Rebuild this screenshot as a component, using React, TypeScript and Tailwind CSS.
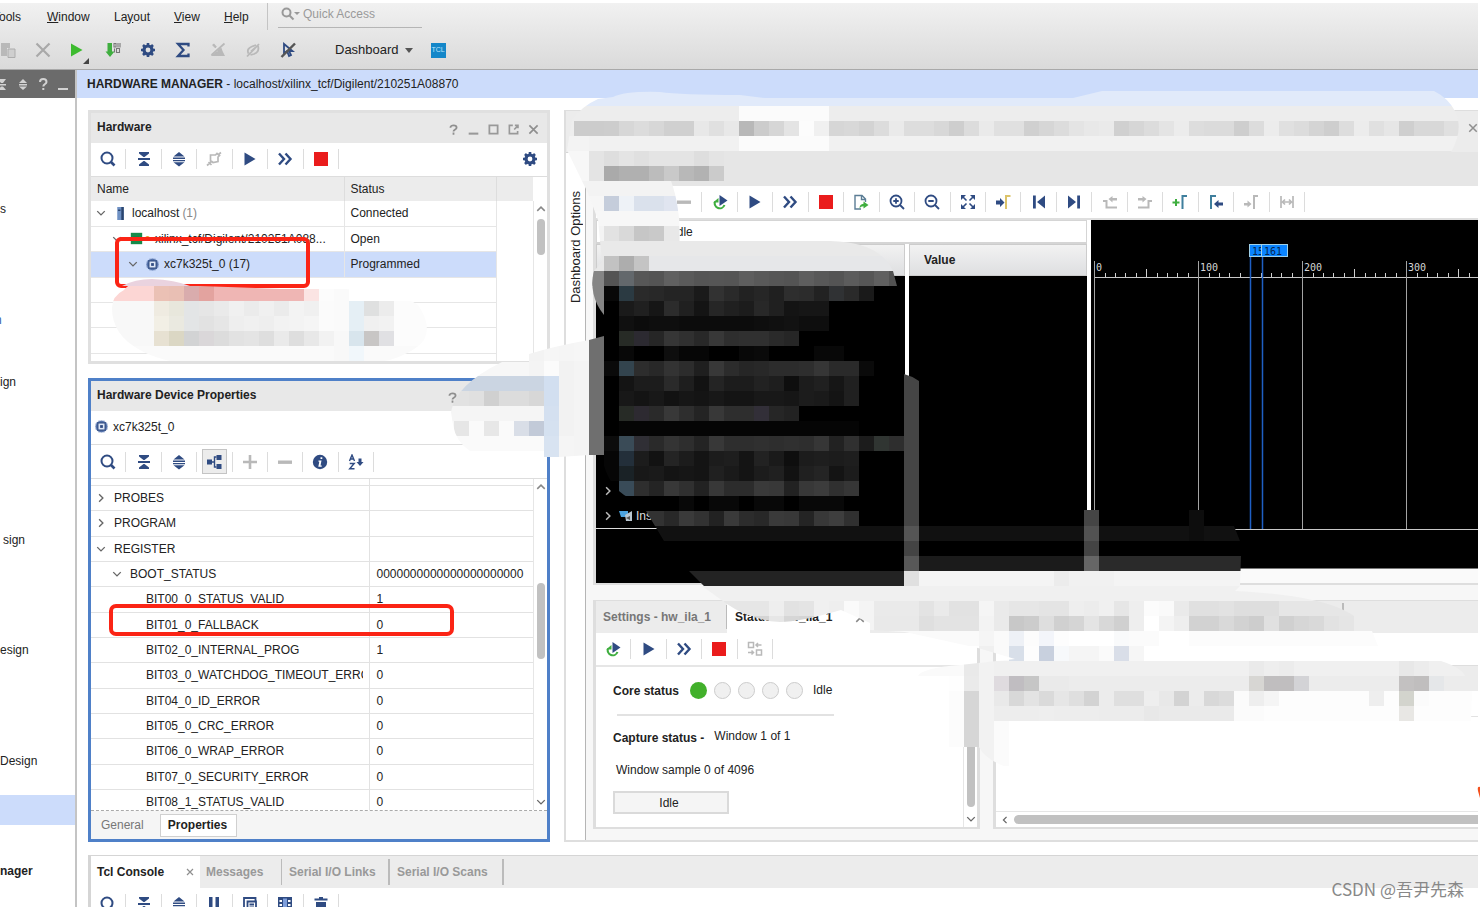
import type { ReactNode } from "react";

const NAVY = "#2f4b82";
const GREY = "#b9b9b9";
const GREEN = "#3fae3f";

const icons: Record<string, ReactNode> = {
  search: (
    <g fill="none" stroke={NAVY} strokeWidth="2">
      <circle cx="7" cy="7" r="5.500" />
      <path d="M11 11L14.500 14.500" strokeWidth="2.600" />
    </g>
  ),
  collapse: (
    <g fill={NAVY}>
      <path d="M3 1h10v1.500L8.500 6h-1L3 2.500z M2 7.100h12v1.800H2z M3 15h10v-1.500L8.500 10h-1L3 13.500z" />
    </g>
  ),
  expand: (
    <path fill={NAVY} d="M8 1l5.500 4.500H2.500z M2 6.500h12v1.400H2z M2 8.900h12v1.400H2z M8 15.500l5.500-4.200H2.500z" />
  ),
  link: (
    <g fill="none" stroke={GREY} strokeWidth="1.700">
      <path d="M4.500 4h5l1.500-1.500 2.500 2L12 6v4.500l-5 1-2.500-2z M1 14.500L5 11 M12.500 3.500l2.500-2 M2.500 11l3 3" />
    </g>
  ),
  play: <path fill={NAVY} d="M2.500 1.500L13.500 8 2.500 14.500z" />,
  run: <path fill="#3dbb2f" d="M1 1.500L12.500 8 1 14.500z" />,
  forward: (
    <path fill="none" stroke={NAVY} strokeWidth="2.400" d="M2 2.500L7 8l-5 5.500 M8.500 2.500L13.500 8l-5 5.500" />
  ),
  stop: <path fill="#ea1c1c" d="M1 1h14v14H1z" />,
  gear: (
    <g fill="none" stroke={NAVY}>
      <circle cx="8" cy="8" r="4" strokeWidth="3.200" />
      <path d="M8 1v3 M8 12v3 M1 8h3 M12 8h3 M3 3l2 2 M11 11l2 2 M13 3l-2 2 M5 11l-2 2" strokeWidth="2.600" />
    </g>
  ),
  tree: (
    <g fill={NAVY}>
      <path d="M1 5.500h5v5H1z M10.500 1h5v5h-5z M10.500 10h5v5h-5z" />
      <path d="M6 8h2.500 M10.500 3H8.500v10h2" fill="none" stroke={NAVY} strokeWidth="1.400" />
    </g>
  ),
  plus: <path fill={GREY} d="M6.700 1h2.600v5.700H15v2.600H9.300V15H6.700V9.300H1V6.700h5.700z" />,
  minus: <path fill={GREY} d="M1 6.500h14v3.400H1z" />,
  info: (
    <g>
      <circle cx="8" cy="8" r="7.200" fill={NAVY} />
      <path d="M8.500 3.200h1.800v1.800H8.500z M6.500 6.500h3l-1 5h1.200v1.200H6.300l1-5H6.500z" fill="#fff" />
    </g>
  ),
  sort: (
    <g fill="none" stroke={NAVY} strokeWidth="1.400">
      <path d="M1.500 7L4 1l2.500 6 M2.400 5h3.200 M1.700 9.500h4.500l-4.500 5.300h4.800" />
      <path d="M12 4.500v4" strokeWidth="3" />
      <path d="M8.500 8h7L12 12z" fill={NAVY} stroke="none" />
    </g>
  ),
  rerun: (
    <g>
      <path fill="none" stroke={GREEN} strokeWidth="2" d="M3 7.500a4.800 4.800 0 1 0 9.500 3.500" />
      <path fill={GREEN} d="M1 8.500h5.500V4z" />
      <path fill={NAVY} d="M7.500 1L15.500 6.500 7.500 12z" />
    </g>
  ),
  exportDoc: (
    <g>
      <path fill="none" stroke="#5b7d95" strokeWidth="1.400" d="M8 15H2V1.500h7L12.500 5v3 M8.500 1.500V5.500h4" />
      <path fill={GREEN} d="M10.500 7.500l5 3.500-5 3.500v-2.200c-2 0-3 .7-4 2.200 0-3 1.500-4.500 4-4.700z" />
    </g>
  ),
  zoomIn: (
    <g fill="none" stroke={NAVY} strokeWidth="1.800">
      <circle cx="7" cy="7" r="5.500" />
      <path d="M4.300 7h5.400 M7 4.300v5.400 M11 11l4 4" />
    </g>
  ),
  zoomOut: (
    <g fill="none" stroke={NAVY} strokeWidth="1.800">
      <circle cx="7" cy="7" r="5.500" />
      <path d="M4.300 7h5.400 M11 11l4 4" />
    </g>
  ),
  fit: (
    <g fill={NAVY} stroke={NAVY}>
      <path stroke="none" d="M1 1h5L1 6z M15 1h-5l5 5z M1 15h5l-5-5z M15 15h-5l5-5z" />
      <path strokeWidth="1.600" d="M3 3l3.500 3.500 M13 3L9.500 6.500 M3 13l3.500-3.500 M13 13L9.500 9.500" />
    </g>
  ),
  toTrigger: (
    <g>
      <path fill={NAVY} d="M1 6.500h4V4l4.500 4.500L5 13v-2.500H1z" />
      <path fill="none" stroke="#dcc36a" strokeWidth="2" d="M15.500 2H11v13" />
    </g>
  ),
  first: <path fill={NAVY} d="M2 1.500h2.800v13H2z M14 1.500v13L6 8z" />,
  last: <path fill={NAVY} d="M14 1.500h-2.800v13H14z M2 1.500v13L10 8z" />,
  prevEdge: (
    <g>
      <path fill="none" stroke={GREY} strokeWidth="2" d="M1 7h3.500v6.500H15" />
      <path fill={GREY} d="M6.500 5L10.500 2v2H15v2.500h-4.500v2z" />
    </g>
  ),
  nextEdge: (
    <g>
      <path fill="none" stroke={GREY} strokeWidth="2" d="M15 7h-3.500v6.500H1" />
      <path fill={GREY} d="M9.500 5L5.500 2v2H1v2.500h4.500v2z" />
    </g>
  ),
  addMarker: (
    <g>
      <path fill={GREEN} d="M3 5h2v2.500h2.500v2H5V12H3V9.500H.5v-2H3z" />
      <path fill="none" stroke="#3f7f9d" strokeWidth="2" d="M15 2h-4.500v13" />
    </g>
  ),
  prevMarker: (
    <g>
      <path fill="none" stroke="#3f7f9d" strokeWidth="2" d="M8 2H3v13" />
      <path fill={NAVY} d="M6 10l4.500-4v2.500H15v3h-4.500V14z" />
    </g>
  ),
  nextMarker: (
    <g>
      <path fill={GREY} d="M1 9h3.500V6.500L8.500 10l-4 3.500V11.500H1z" />
      <path fill="none" stroke={GREY} strokeWidth="2" d="M15 2h-4v13" />
    </g>
  ),
  span: (
    <path fill="none" stroke={GREY} strokeWidth="1.700" d="M2 2v12 M14 2v12 M3 8h10 M6 5.500L3.500 8 6 10.500 M10 5.500L12.500 8 10 10.500" />
  ),
  swap: (
    <path fill="none" stroke={GREY} strokeWidth="1.500" d="M1.500 1.500h5v5h-5z M9.500 9h5v5h-5z M9 4h5.500 M11 2L9 4l2 2 M1 11.500h5.500 M4.500 9.500l2 2-2 2" />
  ),
  paste: (
    <g fill={GREY}>
      <path d="M1 1h9v5H7v8H1z" />
      <path d="M8 7h7v8.500H8z" fill="#cfcfcf" stroke="#adadad" />
    </g>
  ),
  cross: <path fill="none" stroke="#a9a9a9" strokeWidth="2.200" d="M1.500 1.500l13 13 M14.500 1.500l-13 13" />,
  download: (
    <g>
      <path fill={GREEN} d="M2.500 1h4.500v8.500h2.500L5 15 .5 9.500h2z" />
      <path fill="none" stroke="#777" strokeWidth="1.100" d="M9 1.500h2v3.500H9z M13 1v4.500 M15 1v4.500 M9.500 6.500v4 M11.500 6.500h3v4h-3z" />
    </g>
  ),
  sigma: <path fill="none" stroke={NAVY} strokeWidth="2.300" d="M13.500 4.500V2H3l5.500 6L3 14h10.500v-2.500" />,
  noEdit: (
    <g fill={GREY}>
      <path d="M2 3l2-1.500 3 3.500-1.500 1.500z M9 6h2.500l1 3 2.500 5H1l3-4h3z" />
      <path d="M1 12L14 1" fill="none" stroke="#e4e4e4" strokeWidth="3" />
      <path d="M1.500 13L14.500 1.500" fill="none" stroke={GREY} strokeWidth="1.800" />
    </g>
  ),
  noLink: (
    <path fill="none" stroke={GREY} strokeWidth="1.800" d="M2 14.500L14 2 M3.500 11.500c-2-4 1-6 3.500-7l4-1.500 M5.500 13l3.500-1c4-1.500 5-4.500 4-8 M6 9.500L10 6" />
  ),
  noCursor: (
    <g fill="none">
      <path stroke={NAVY} strokeWidth="1.800" d="M4 2v9l3-2 2 5 2-1-2-4h3.500z" />
      <path stroke="#555" strokeWidth="2.400" d="M1.500 15L15 1.500" />
    </g>
  ),
  pause: <path fill={NAVY} d="M3 1h3.500v14H3z M9.500 1H13v14H9.500z" />,
  copy: (
    <g fill="none" stroke={NAVY} strokeWidth="1.800">
      <path d="M13.500 5V2H2v12h3" />
      <path d="M5.500 5.500h8.500V15H5.500z M7.500 8.500h4.500 M7.500 11.500h4.500" />
    </g>
  ),
  columns: (
    <g>
      <path fill={NAVY} d="M1 1h14v14H1z" />
      <path fill="#fff" d="M2.500 4h2.500v2H2.500z M2.500 8h2.500v2H2.500z M11 4h2.500v2H11z M11 8h2.500v2H11z" />
      <path fill="#7f9fdc" d="M6 2.500h4V14H6z" />
    </g>
  ),
  trash: <path fill={NAVY} d="M6 1h4v1.500h4.500V4.500h-13v-2H6z M3 6h10v9H3z" />,
  chip: (
    <g>
      <circle cx="8" cy="8" r="7.500" fill="#5673ab" />
      <path d="M5 0v16 M11 0v16 M0 5h16 M0 11h16" fill="none" stroke="#8fa5cf" strokeWidth=".8" />
      <path d="M3.500 3.500h9v9h-9z" fill="#dfe7f6" stroke={NAVY} strokeWidth="1.500" />
      <path d="M6.300 6.300h3.400v3.400H6.300z" fill={NAVY} />
    </g>
  ),
  down: <path fill="none" stroke="#666" strokeWidth="1.800" d="M3 5.500L8 10.500l5-5" />,
  right: <path fill="none" stroke="#666" strokeWidth="1.800" d="M5.500 3L10.500 8l-5 5" />,
  rightLight: <path fill="none" stroke="#bbb" strokeWidth="2" d="M5.500 3L10.500 8l-5 5" />,
  up: <path fill="none" stroke="#888" strokeWidth="2" d="M3 10.500L8 5.500l5 5" />,
  left: <path fill="none" stroke="#666" strokeWidth="2" d="M10.500 3L5.500 8l5 5" />,
  help: (
    <path fill="none" stroke="#8f8f8f" strokeWidth="2.600" d="M3.500 5.500C3.500 1 12.500 1 12.500 5.500 12.500 8 8 8 8 11 M8 12.500v3" />
  ),
  minimize: <path fill="#999" d="M1 12.500h14v3H1z" />,
  maximize: <path fill="none" stroke="#999" strokeWidth="2.600" d="M2 2h12v12H2z" />,
  float: <path fill="none" stroke="#999" strokeWidth="2.400" d="M7 2H2v12h12v-4 M9 8l5-5 M10 2h4.500v4" />,
  close: <path fill="none" stroke="#8f8f8f" strokeWidth="2.400" d="M2 2l12 12 M14 2L2 14" />,
  server: (
    <g>
      <path fill="#6f91c4" d="M4 0h8v16H4z" />
      <path fill="#2b456f" d="M9 0h3v16H9z M5 3h3v2H5z" />
    </g>
  ),
  board: (
    <g>
      <path fill="#168a4a" d="M1 1h14v14H1z" />
      <path fill="#0c5a2f" d="M4 6h7v5H4z" />
    </g>
  ),
};

function Icon({ name, className = "size-4" }: { name: string; className?: string }) {
  return (
    <svg viewBox="0 0 16 16" className={`shrink-0 ${className}`} aria-hidden="true">
      {icons[name]}
    </svg>
  );
}

function Tool({ name, active = false }: { name: string; active?: boolean }) {
  return (
    <div className="flex h-5 items-center justify-center border-r border-[#dcdcdc]">
      <button
        type="button"
        aria-label={name}
        className={
          active
            ? "flex size-[25px] items-center justify-center border border-[#c4c4c4] bg-[#ececec]"
            : "flex size-6 items-center justify-center"
        }
      >
        <Icon name={name} />
      </button>
    </div>
  );
}

const hardwareRows = [
  { pad: "pl-1", icon: "server", name: "localhost", count: "(1)", status: "Connected" },
  { pad: "pl-5", icon: "board", name: "xilinx_tcf/Digilent/210251A088...", count: "", status: "Open" },
  { pad: "pl-9", icon: "chip", name: "xc7k325t_0 (17)", count: "", status: "Programmed" },
];

const propertyRows = [
  { name: "PROBES", value: "", arrow: "right", pad: "pl-1" },
  { name: "PROGRAM", value: "", arrow: "right", pad: "pl-1" },
  { name: "REGISTER", value: "", arrow: "down", pad: "pl-1" },
  { name: "BOOT_STATUS", value: "0000000000000000000000", arrow: "down", pad: "pl-5" },
  { name: "BIT00_0_STATUS_VALID", value: "1" },
  { name: "BIT01_0_FALLBACK", value: "0" },
  { name: "BIT02_0_INTERNAL_PROG", value: "1" },
  { name: "BIT03_0_WATCHDOG_TIMEOUT_ERROR", value: "0" },
  { name: "BIT04_0_ID_ERROR", value: "0" },
  { name: "BIT05_0_CRC_ERROR", value: "0" },
  { name: "BIT06_0_WRAP_ERROR", value: "0" },
  { name: "BIT07_0_SECURITY_ERROR", value: "0" },
  { name: "BIT08_1_STATUS_VALID", value: "0" },
];

const navItems = [
  { label: "s", className: "h-[118px]" },
  { label: "n", className: "h-[111px] -ml-[5px] text-[#3b5ea8]" },
  { label: "ign", className: "h-[62px]" },
  { label: "sign", className: "h-[158px] pl-[3px]" },
  { label: "esign", className: "h-[110px]" },
  { label: "Design", className: "h-[111px]" },
];

function MenuBar() {
  return (
    <header className="h-[70px] shrink-0 overflow-hidden border-t-[3px] border-b border-t-white border-b-[#a9a9a9] bg-linear-to-b from-[#f1f1f1] to-[#dadada]">
      <div className="flex h-[27px] items-center">
        <nav className="-ml-[7px] flex w-[274px] items-center text-[12px]">
          <button type="button" className="w-[54px] text-left">Tools</button>
          <button type="button" className="w-[67px] text-left"><u>W</u>indow</button>
          <button type="button" className="w-[60px] text-left">La<u>y</u>out</button>
          <button type="button" className="w-[50px] text-left"><u>V</u>iew</button>
          <button type="button" className="text-left"><u>H</u>elp</button>
        </nav>
        <label className="flex h-full items-start border-l border-[#c4c4c4] pl-[10px]">
          <span className="flex h-[25px] w-[144px] items-center gap-0.5 border-b border-[#b5b5b5] pb-0.5 pl-[3px]">
            <svg viewBox="0 0 20 14" className="h-3.5 w-5 shrink-0" aria-hidden="true">
              <g fill="none" stroke="#999" strokeWidth="2">
                <circle cx="5.500" cy="5.500" r="4" />
                <path d="M8.500 8.500l4 4" />
              </g>
              <path fill="#999" d="M13 5h6l-3 3z" />
            </svg>
            <input
              type="text"
              aria-label="Quick Access"
              placeholder="Quick Access"
              className="w-[110px] bg-transparent text-[12px] outline-none placeholder:text-[#9a9a9a]"
            />
          </span>
        </label>
      </div>
      <div className="flex h-10 items-center">
        <div className="-ml-[10px] grid w-[316px] shrink-0 grid-cols-9">
          {["paste", "cross", "run", "download", "gear", "sigma", "noEdit", "noLink", "noCursor"].map((name) => (
            <button key={name} type="button" aria-label={name} className="relative flex items-center justify-center">
              <Icon name={name} />
              {name === "run" && (
                <svg viewBox="0 0 6 6" className="absolute right-1.5 -bottom-1.5 size-1.5" aria-hidden="true">
                  <path d="M6 0v6H0z" fill="#444" />
                </svg>
              )}
            </button>
          ))}
        </div>
        <button type="button" className="ml-[29px] flex items-center gap-1.5 text-[13px]">
          Dashboard
          <svg viewBox="0 0 8 5" className="h-[5px] w-2" aria-hidden="true">
            <path d="M0 0h8L4 5z" fill="#555" />
          </svg>
        </button>
        <button type="button" className="ml-[18px] flex size-[15px] items-center justify-center overflow-hidden bg-[#1487c9] text-[7px] text-[#bfe4fb]">
          TCL
        </button>
      </div>
    </header>
  );
}

function FlowNavigator() {
  return (
    <aside className="flex w-[77px] shrink-0 flex-col overflow-hidden border-r-2 border-[#c4c4c4] text-[12px]">
      <div className="flex h-[28px] shrink-0 items-center bg-[#6b6b6b] text-[#ddd]">
        <svg viewBox="0 0 75 28" className="h-7 w-[75px]" aria-hidden="true">
          <g fill="#d2d2d2">
            <path d="M-2 9h8L3 13H1z M-2 14h8v1.500h-8z M-2 20h8L3 16.500H1z" />
            <path d="M23 9l4 4h-8z M19 14h8v1.500h-8z M23 20l4-3.500h-8z" />
            <path d="M58 18h10v2H58z" />
          </g>
          <path d="M40 12c0-4 6.500-4 6.500 0 0 2-3.200 2-3.200 4.500 M43.300 18v2" fill="none" stroke="#d2d2d2" strokeWidth="2" />
        </svg>
      </div>
      <ul>
        {navItems.map((item) => (
          <li key={item.label} className={`flex items-end leading-[14px] ${item.className}`}>
            {item.label}
          </li>
        ))}
      </ul>
      <div className="mt-[27px] h-[30px] shrink-0 bg-[#ccdcfb]" />
      <div className="mt-[39px] font-bold leading-[14px]">nager</div>
    </aside>
  );
}

function HardwarePanel() {
  return (
    <section className="flex h-[254px] shrink-0 flex-col border-[3px] border-[#e0e0e0] bg-white">
      <div className="flex h-[30px] shrink-0 items-center justify-between bg-[#e8e8e8] pr-2 pb-0.5 pl-1.5">
        <h2 className="text-[12px] font-bold">Hardware</h2>
        <div className="mt-1 flex gap-[9px]">
          {["help", "minimize", "maximize", "float", "close"].map((name) => (
            <button key={name} type="button" aria-label={name}>
              <Icon name={name} className="size-[11px]" />
            </button>
          ))}
        </div>
      </div>
      <div className="flex h-[33px] shrink-0 items-center justify-between pr-[9px] pb-px">
        <div className="grid w-[248px] grid-cols-7">
          {["search", "collapse", "expand", "link", "play", "forward", "stop"].map((name) => (
            <Tool key={name} name={name} />
          ))}
        </div>
        <button type="button" aria-label="settings">
          <Icon name="gear" />
        </button>
      </div>
      <div className="flex min-h-0 flex-1 overflow-hidden border-t border-[#ddd]">
        <div className="flex-1">
          <table className="w-full table-fixed text-left text-[12px]">
            <thead className="bg-[#ececec]">
              <tr className="h-6">
                <th className="w-[253px] border-r border-[#ddd] pl-1.5 font-normal">Name</th>
                <th className="w-[152px] border-r border-[#ddd] pl-1.5 font-normal">Status</th>
                <th />
              </tr>
            </thead>
            <tbody className="[&>tr]:h-[25px] [&>tr:nth-child(3n)]:h-[26px]">
              {hardwareRows.map((row) => (
                <tr key={row.name}>
                  <td className={`border-r border-b border-[#e6e6e6] ${row.icon === "chip" ? "bg-[#ccdcfb]" : ""}`}>
                    <div className={`flex items-center whitespace-nowrap ${row.pad}`}>
                      <Icon name="down" className="size-3" />
                      <Icon name={row.icon} className="ml-[7px] size-[13px]" />
                      {row.icon === "board" && <i className="ml-0.5 size-[5px] rounded-full bg-[#e0a030]" />}
                      <span className="ml-[5px]">{row.name}</span>
                      <span className="ml-[3px] text-[#888]">{row.count}</span>
                    </div>
                  </td>
                  <td className={`border-r border-b border-[#e6e6e6] pl-1.5 ${row.icon === "chip" ? "bg-[#ccdcfb]" : ""}`}>
                    {row.status}
                  </td>
                  <td />
                </tr>
              ))}
              {[0, 1, 2, 3].map((n) => (
                <tr key={n}>
                  <td className="border-b border-[#e6e6e6]" />
                  <td className="border-r border-b border-[#e6e6e6]" />
                  <td />
                </tr>
              ))}
            </tbody>
          </table>
        </div>
        <div className="mt-6 flex w-[14px] shrink-0 flex-col items-center border-l border-[#e6e6e6] bg-white">
          <Icon name="up" className="my-0.5 size-3" />
          <div className="mt-0.5 h-9 w-2 rounded-full bg-[#c1c1c1]" />
        </div>
      </div>
    </section>
  );
}

function PropertiesPanel() {
  return (
    <section className="flex min-h-0 flex-1 flex-col border-[3px] border-[#4f80c8] bg-white text-[12px]">
      <div className="flex h-[30px] shrink-0 items-center justify-between bg-[#e8e8e8] pr-[89px] pb-0.5 pl-1.5">
        <h2 className="font-bold">Hardware Device Properties</h2>
        <button type="button" aria-label="help" className="mt-1">
          <Icon name="help" className="size-[11px]" />
        </button>
      </div>
      <div className="flex h-[33px] shrink-0 items-center gap-[5px] pb-0.5 pl-1">
        <Icon name="chip" className="size-[13px]" />
        xc7k325t_0
      </div>
      <div className="flex h-[34px] shrink-0 items-center border-t border-[#ddd]">
        <div className="grid w-[283px] grid-cols-8">
          {["search", "collapse", "expand", "tree", "plus", "minus", "info", "sort"].map((name) => (
            <Tool key={name} name={name} active={name === "tree"} />
          ))}
        </div>
      </div>
      <div className="flex min-h-0 flex-1 overflow-hidden border-t border-b border-t-[#ddd] border-b-[#aaa] [border-bottom-style:dashed]">
        <div className="min-w-0 flex-1">
          <table className="w-full table-fixed">
            <tbody className="[&>tr]:h-[25px] [&>tr:nth-child(3n)]:h-[26px]">
              <tr className="!h-1.5">
                <td className="w-[278px] border-r border-b border-[#e2e2e2]" />
                <td className="border-b border-[#e2e2e2]" />
              </tr>
              {propertyRows.map((row) => (
                <tr key={row.name}>
                  <td className="border-r border-b border-[#e2e2e2] pr-1.5">
                    {row.arrow ? (
                      <div className={`flex items-center gap-[7px] ${row.pad}`}>
                        <Icon name={row.arrow} className="size-3" />
                        {row.name}
                      </div>
                    ) : (
                      <div className="overflow-hidden pl-[55px] whitespace-nowrap">{row.name}</div>
                    )}
                  </td>
                  <td className="overflow-hidden border-b border-[#e2e2e2] pl-[7px] whitespace-nowrap">{row.value}</td>
                </tr>
              ))}
            </tbody>
          </table>
        </div>
        <div className="flex w-[14px] flex-col items-center border-l border-[#e6e6e6]">
          <Icon name="up" className="my-0.5 size-3" />
          <div className="mt-[88px] h-[76px] w-2 rounded-full bg-[#c1c1c1]" />
          <Icon name="down" className="mt-auto mb-0.5 size-3" />
        </div>
      </div>
      <div className="flex h-7 shrink-0 items-center bg-[#f5f5f5] pl-2.5" role="tablist">
        <button type="button" role="tab" className="w-[59px] text-left text-[#777]">General</button>
        <button type="button" role="tab" className="h-[23px] w-[77px] border border-[#d0d0d0] bg-white pr-0.5 font-bold">
          Properties
        </button>
      </div>
    </section>
  );
}

function Waveform() {
  const ticks = Array.from({ length: 90 }, (_, i) => i);
  return (
    <svg className="block h-full w-full bg-black" role="img" aria-label="Waveform">
      <path d="M4 57.500H2000 M0 309.500H2000" stroke="#c8c8c8" />
      {ticks.map((i) => {
        const x = Math.floor(3.6 + i * 10.4);
        const top = i % 10 === 0 ? 41 : i % 5 === 0 ? 49 : 53;
        return (
          <g key={i}>
            <path d={`M${x}.5 ${top}V${i % 10 === 0 ? 309 : 57}`} stroke={i % 10 === 0 ? "#a4a4a4" : "#d0d0d0"} />
            {i % 10 === 0 && (
              <text x={x + 2} y="51" fill="#d6d6d6" className="font-['DejaVu_Sans_Mono',monospace] text-[10px]">
                {i * 10}
              </text>
            )}
          </g>
        );
      })}
      <path d="M159.500 36V309 M171.500 36V309" stroke="#1f5fc4" strokeWidth="1.500" />
      <rect x="158.500" y="24.500" width="13" height="12" fill="#0a84ff" stroke="#9fd0e8" />
      <text x="161" y="35" fill="#06264f" className="font-['DejaVu_Sans_Mono',monospace] text-[10px]">15</text>
      <rect x="170.500" y="24.500" width="26" height="12" fill="#0a84ff" stroke="#9fd0e8" />
      <text x="173" y="35" fill="#06264f" className="font-['DejaVu_Sans_Mono',monospace] text-[10px]">161</text>
    </svg>
  );
}

const waveTools = [
  "search", "plus", "minus", "rerun", "play", "forward", "stop", "exportDoc", "zoomIn", "zoomOut",
  "fit", "toTrigger", "first", "last", "prevEdge", "nextEdge", "addMarker", "prevMarker", "nextMarker", "span",
];

function WaveWindow() {
  return (
    <section className="flex min-h-0 flex-1 flex-col border-b-2 border-l-[3px] border-[#dedede] bg-white">
      <div className="flex h-[34px] shrink-0 items-center border-b-2 border-[#dedede]">
        <div className="grid w-[709px] grid-cols-20">
          {waveTools.map((name) => (
            <Tool key={name} name={name} />
          ))}
        </div>
      </div>
      <div className="flex min-h-0 flex-1">
        <div className="flex w-[491px] shrink-0 flex-col">
          <div className="flex h-6 shrink-0 items-center border border-b-2 border-[#d5d5d5] pl-[15px] text-[12px]">
            ILA Status: Idle
          </div>
          <div className="flex min-h-0 flex-1">
            <div className="flex w-[309px] flex-col">
              <div className="h-8 border border-[#ccc] bg-linear-to-b from-[#f2f2f2] to-[#dedfe1]" />
              <ul className="flex-1 bg-black pl-1.5 text-[12px] text-[#ddd]">
                <li className="mt-[202px] flex h-[25px] items-center">
                  <Icon name="rightLight" className="size-3" />
                </li>
                <li className="flex h-[25px] items-center">
                  <Icon name="rightLight" className="size-3" />
                  <svg viewBox="0 0 14 12" className="ml-[5px] h-3 w-3.5" aria-hidden="true">
                    <path d="M0 1h9v6H2z" fill="#4ba3e0" />
                    <path d="M6 5l7-4v10H7z" fill="#b9c6d0" />
                    <path d="M7 8l4-2v4z" fill="#555" />
                  </svg>
                  <span className="ml-[3px]">Ins</span>
                </li>
                <li className="-ml-1.5 border-t border-[#ddd]" />
              </ul>
            </div>
            <div className="ml-1 flex w-[178px] flex-col">
              <div className="flex h-8 items-center border border-[#ccc] bg-linear-to-b from-[#f2f2f2] to-[#dedfe1] pl-3.5 text-[12px] font-bold">
                Value
              </div>
              <div className="flex-1 bg-black" />
            </div>
          </div>
        </div>
        <div className="ml-1 flex min-w-0 flex-1 flex-col">
          <div className="min-h-0 flex-1">
            <Waveform />
          </div>
          <div className="h-[15px] shrink-0 border-t border-[#777] bg-[#fafafa]" />
        </div>
      </div>
    </section>
  );
}

function StatusPanel() {
  return (
    <section className="flex w-[387px] shrink-0 flex-col border-x-[3px] border-t border-b-2 border-[#dedede] bg-white text-[12px]">
      <div className="flex h-8 shrink-0 items-center bg-[#ececec]" role="tablist">
        <button type="button" role="tab" className="h-6 w-[131px] border-r border-[#bbb] pl-[7px] text-left font-bold text-[#777]">
          Settings - hw_ila_1
        </button>
        <button type="button" role="tab" className="flex h-8 w-[143px] items-center justify-between bg-white pr-1 pl-2 font-bold">
          Status - hw_ila_1
          <Icon name="up" className="mt-1.5 size-3" />
        </button>
      </div>
      <div className="flex h-[34px] shrink-0 items-center border-b-2 border-[#e6e6e6]">
        <div className="grid w-[177px] grid-cols-5">
          {["rerun", "play", "forward", "stop", "swap"].map((name) => (
            <Tool key={name} name={name} />
          ))}
        </div>
      </div>
      <div className="flex min-h-0 flex-1">
        <div className="flex-1 pt-[13px] pl-[17px]">
          <div className="flex items-center">
            <strong className="w-[77px] pt-0.5">Core status</strong>
            <div className="flex gap-[7px]">
              <i className="size-[17px] rounded-full bg-[#42b02b]" />
              <i className="size-[17px] rounded-full border border-[#ccc] bg-[#f0f0f0]" />
              <i className="size-[17px] rounded-full border border-[#ccc] bg-[#f0f0f0]" />
              <i className="size-[17px] rounded-full border border-[#ccc] bg-[#f0f0f0]" />
              <i className="size-[17px] rounded-full border border-[#ccc] bg-[#f0f0f0]" />
            </div>
            <span className="ml-2.5">Idle</span>
          </div>
          <hr className="mt-3.5 ml-1 w-[217px] border-t-2 border-[#e2e2e2]" />
          <div className="mt-[11px] flex">
            <strong className="pt-0.5">Capture status -</strong>
            <span className="ml-2.5">Window 1 of 1</span>
          </div>
          <p className="mt-3.5 pl-[3px]">Window sample 0 of 4096</p>
          <div className="mt-3 flex h-[23px] w-[116px] items-center justify-center border-2 border-[#dadada] bg-[#f5f5f5] pr-1">
            Idle
          </div>
        </div>
        <div className="flex w-[14px] flex-col items-center border-l border-[#e6e6e6]">
          <Icon name="up" className="my-0.5 size-3" />
          <div className="w-2 flex-1 rounded-full bg-[#c1c1c1]" />
          <Icon name="down" className="mt-1.5 mb-0.5 size-3" />
        </div>
      </div>
    </section>
  );
}

function TriggerPanel() {
  return (
    <section className="flex min-w-0 flex-1 flex-col border-t border-b-2 border-l-[3px] border-[#dedede] bg-white">
      <div className="h-8 shrink-0 bg-[#ececec] pt-0.5">
        <div className="h-6 w-[348px] border-r-2 border-[#bbb]" />
      </div>
      <div className="h-[33px] shrink-0 border-b border-[#dedede]" />
      <div className="h-[25px] shrink-0 border-b border-[#e2e2e2] bg-[#ececec]" />
      <div className="h-[26px] shrink-0 border-b border-[#e2e2e2]" />
      <div className="mt-auto flex h-4 shrink-0 items-center border-t border-[#e6e6e6] pl-1">
        <Icon name="left" className="size-2.5" />
        <div className="ml-1 h-[9px] flex-1 rounded-l-full bg-[#c1c1c1]" />
      </div>
    </section>
  );
}

function Dashboard() {
  return (
    <div className="flex min-w-0 flex-1 flex-col border-t border-b-2 border-l-2 border-[#dedede] bg-[#f7f7f7]">
      <div className="flex h-[42px] shrink-0 items-center justify-end border-b border-[#d5d5d5] bg-[#ececec] pb-2">
        <button type="button" aria-label="close">
          <Icon name="close" className="size-2.5" />
        </button>
      </div>
      <div className="flex min-h-0 flex-1">
        <div className="flex w-5 shrink-0 items-start justify-center border-r border-[#b5b5b5] bg-white pt-[38px]">
          <button type="button" className="rotate-180 text-[13px] leading-5 [writing-mode:vertical-rl]">Dashboard Options</button>
        </div>
        <div className="flex min-w-0 flex-1 flex-col pb-[11px] pl-[7px]">
          <div className="-ml-[7px] h-[33px] shrink-0 bg-[#e6e6e6]" />
          <WaveWindow />
          <div className="mt-[15px] flex h-[229px] shrink-0 gap-[13px]">
            <StatusPanel />
            <TriggerPanel />
          </div>
        </div>
      </div>
    </div>
  );
}

function Console() {
  return (
    <section className="ml-[11px] h-[52px] shrink-0 overflow-hidden border-t border-l-[3px] border-[#d5d5d5] bg-white text-[12px]">
      <div className="flex h-8 items-center bg-[#ececec] font-bold text-[#999]" role="tablist">
        <button type="button" role="tab" className="flex h-8 w-[109px] items-center justify-between bg-white pr-1.5 pl-1.5 text-[#222]">
          Tcl Console
          <Icon name="close" className="size-2" />
        </button>
        <button type="button" role="tab" className="h-[26px] w-[82px] border-r border-[#bbb] pl-1.5 text-left">Messages</button>
        <button type="button" role="tab" className="h-[26px] w-[108px] border-r-2 border-[#bbb] pl-[7px] text-left">Serial I/O Links</button>
        <button type="button" role="tab" className="h-[26px] w-[114px] border-r-2 border-[#bbb] pl-[7px] text-left">Serial I/O Scans</button>
      </div>
      <div className="grid w-[248px] grid-cols-7 pt-1.5">
        {["search", "collapse", "expand", "pause", "copy", "columns", "trash"].map((name) => (
          <Tool key={name} name={name} />
        ))}
      </div>
    </section>
  );
}

// Mosaic redaction. Cells are 15px; each row is [x, y, "colour colour ..."],
// a two digit entry is a grey level and *n repeats it.
type MosaicRow = [number, number, string];

const lightRows: MosaicRow[] = [
  [574, 91, "e1eafa*60"],
  [559, 106, "ed*12 fb*6 ed*48"],
  [559, 121, "ee cc cc cd d7 dc d7 d0 d0 e8 e0 e8 b8 cc d6 e4 fc f0 d6 d8 d3 dc ea dd dd d8 ce dc ea e0 e0 d0 d6 dc e4 e8 ea d0 d6 dc e4 ec dd db db ce dc ec e0 dc d4 ce dd ec e0 e6 cf d8 d8 e0"],
  [559, 136, "f3*2 f1*10 fb*6 f1*48"],
  [559, 151, "f7*2 e4 de e4 e0 e4 e4 e4 de e4 e6*51"],
  [559, 166, "f7*2 e4 aa b0 b0 bc c9 b8 b2 cb e6*51"],
  [574, 181, "f3*8"],
  [589, 196, "f6 c5cddb eef2f7 dae1ec dae1ec e0e5f0 f4"],
  [589, 211, "f7*7"],
  [589, 226, "f4 e2 d9 c6 c9 e8 f4"],
  [589, 241, "e9*21"],
  [589, 256, "e8 c2 ad c4 e6e7e9*18"],
  [589, 271, "99 54 63686c 57 54 60 5a 55 56 55 5e 59 56 54 5e 58 54 5c 56 60 52"],
];

const darkRows: MosaicRow[] = [
  [604, 286, "08 2b3a42 2a 28 24 24 1a 32 2a 22 26 20 2e 2c 22 303234 2a 1a 00"],
  [604, 301, "00 1a 20 16 2c 20 14 26 20 1c 28 20 14 16 16 00"],
  [604, 316, "00 10 0c 0e 0e 0c 0c 0c 0c 0c 0e 10 12 0e 0e"],
  [604, 331, "00 272b26 2c2a31 26 36 30 28 38 2e 30 30 2a 26 00"],
  [604, 346, "00 08 00 00 0e 06 06 00 00 08 0a 00 00 00 08 08"],
  [604, 361, "0a 33444e 2d 28 33 2c 1f 38 2c 26 28 2c 2c 2e 36 2a 2a 0a"],
  [604, 376, "00 14 1c 1c 2a 1e 12 24 1c 1c 22 1e 0e 1c 20 16 20"],
  [604, 391, "00 18 14 18 12 16 14 18 14 14 18 18 16 1c 1a 14 20"],
  [604, 406, "00 272b26 2d2a31 2a 38 2e 24 38 2e 2e 322f38 26 22"],
  [604, 421, "00 05*16"],
  [604, 436, "0c 3a4b57 302f35 2a 34 2e 24 38 2e 2e 30 2e 30 2e 36 22 30 1c 303532 2e"],
  [604, 451, "06 232f3a 1c 12 24 1c 14 1c 1e 14 22 1a 0e 1c 1e 1c 1e"],
  [604, 466, "06 1a2226 18 1a 14 16 14 20 1a 14 1c 20 12 20 24 14 1c"],
  [604, 481, "00 394b58 2e 24 38 30 22 38 2c 2c 3a 38 22 38 3c 30 36"],
  [634, 496, "00*3 08 00 08 08 00 08 08 00 08 08 08 00"],
  [634, 511, "3a 32 28 3a 32 22 3a 2c 28 3a 38 24 38 3e 30"],
  [649, 526, "11*17 55 11*11 52 11*11"],
  [649, 541, "00*17 44 00*11 44 00*11"],
  [649, 556, "00*17 58 1b*11 66 2a*11"],
  [649, 571, "23*17 e0 f4*9 ec f1*3 f4*9"],
];

const lowerRows: MosaicRow[] = [
  [694, 586, "f0*44"],
  [724, 601, "e6*3 ee e2 e4 f0 ee fa f4 ea*3 e3 ea e2 e2 f5 ea e6 e6 e4 e4 ee ec f0 e6 ee fc fa ea e0 e0 e2 de de de e6*5"],
  [754, 616, "d4 e6 d6 d4 e8 ee fa f4 e9*3 df e3*3 f3 ea c8 cc de d0 d5 e4 d8 d0 ee ff f4 ee d2 d2 d9 d2 cd e0 d0 d6 d9 e2 e5"],
  [889, 631, "fa*6 f5 fa eef1f6 fc f3f5fa fd ff*3 f9fafb fb fb ff ff fc*15"],
  [889, 646, "ff*6 f0 fa d8dfe9 fd c8d0de f7f9fb f5 f5 fa d9dee8 f6 ff*18"],
  [904, 661, "fa*4 e9 f2 f0*17 ea ee ec f0*7 e8 ec f0*4"],
  [904, 676, "fe*4 ea f2 dfdbdf c0bdc1 c6 ea*2 ec*12 d7d6d3 c0bebf c0bebf d3d3d6 ec*6 c3c1c1 c0bebe e5e7e9 ec*6"],
  [949, 691, "fc d6 f2 e9 d8 e3 da e6 df d3 ec df df ee e8 d3 ec d8 dc fb ee f5 fd*6 ee fd d3d4cd fb fd*4"],
  [949, 706, "fc d6 f2 ed*3 ee ed*3 ec*3 e8 ea*5 fb*2 fd*9 e8e7e4 fd*5"],
  [949, 721, "fc d6 f2 fb"],
  [949, 736, "fc d6 f2 fb"],
  [979, 751, "f2 fb"],
];

const sideRows: MosaicRow[] = [
  [529, 331, "f3 f6 f5 f6"],
  [529, 346, "f3 f6 f5 f6"],
  [439, 361, "f7*6 f4 fb f2 f4"],
  [439, 376, "cbd5e2*7 d2dff0 f2 f4"],
  [439, 391, "e2*2 e0 d0 dc dc d7 d2dff0 f2 f4"],
  [439, 406, "f5*7 d4e0f0 f2 f4"],
  [439, 421, "f8 e6 fa e7 fa d9dee7 c2cad8 d5e1f0 f2 f4"],
  [439, 436, "fa*7 d8e3f1 f5 f4"],
  [544, 451, "d8e3f1 f5 f4"],
];

const treeRows: MosaicRow[] = [
  [109, 286, "fcd6d4*3 ebc1b5 e9bfb4 d9acad e3a39f efb6b4*6 fbe4e3 fc fa"],
  [109, 301, "f8*3 efebe1 e8e7dc e3e5e6 e6 eaeaea f0 eb f0 eb f3 f0 fb fa e5eff5 dfe0e0 ececec fc*3"],
  [109, 316, "f8*3 f2efe5 eae9e0 e3e5e6 e2 e6 ee f0 ee f2 f3 f5 fb fa e5eff5 f0 f2 fc*3"],
  [109, 331, "f8*3 e7e1d2 dbd7c4 d2d3d4 dad7d9 dcdcdc e2 e4 de ea de e8 f2 f8 d8e5ed c8c6c5 e0e0e3 fc*3"],
  [109, 346, "fa*3 fa*12 f8 f1f7fb fa*5"],
];

function toCells(spec: string) {
  return spec.split(" ").flatMap((part) => {
    const [hex, count] = part.split("*");
    const colour = hex.length === 2 ? `#${hex}${hex}${hex}` : `#${hex}`;
    return Array<string>(Number(count ?? 1)).fill(colour);
  });
}

function Mosaic({ id, outline, rows }: { id: string; outline: string; rows: MosaicRow[] }) {
  return (
    <g>
      <clipPath id={id}>
        <path d={outline} />
      </clipPath>
      <g clipPath={`url(#${id})`} shapeRendering="crispEdges">
        {rows.map(([x, y, spec]) =>
          toCells(spec).map((fill, i) => <rect key={`${x + i * 15}-${y}`} x={x + i * 15} y={y} width="15" height="15" fill={fill} />)
        )}
      </g>
    </g>
  );
}

function Annotations() {
  return (
    <>
      <svg className="pointer-events-none absolute top-0 left-0 h-[907px] w-[1478px]" aria-hidden="true">
        <g fill="none" stroke="#fb2415" strokeWidth="4">
          <rect x="117" y="239" width="191" height="47" rx="4" />
          <rect x="111" y="606" width="341" height="28" rx="5" />
        </g>
        <Mosaic
          id="tree"
          rows={treeRows}
          outline="M112 308Q112 296 124 290Q132 280 152 279Q180 279 200 286L280 289H345Q400 292 418 305Q432 325 424 340Q415 352 390 360Q340 368 260 369Q170 368 140 350Q112 335 112 308Z"
        />
        <path d="M122 286Q135 279 152 279Q175 280 190 286Z" fill="#ead3df" />
        <Mosaic
          id="side"
          rows={sideRows}
          outline="M451 412Q455 385 502 362H529V354Q555 346 589 340V455L559 457H544V451H470Q456 442 453 425Z"
        />
        <path d="M589 340L604 336V455H589Z" fill="#6f6f6f" />
        <Mosaic
          id="light"
          rows={lightRows}
          outline="M572 120Q582 106 598 99L613 97Q625 91 660 92Q680 95 740 95L765 98H1073L1102 91H1434Q1448 98 1455 111Q1464 130 1451 152H1478V181H671Q680 205 680 241H830Q880 242 893 271L897 286H604V315Q588 295 594 271L602 262L598 220L588 193L582 181L567 150Z"
        />
        <path d="M594 271H604V315Q588 295 594 271Z" fill="#858585" />
        <Mosaic
          id="dark"
          rows={darkRows}
          outline="M604 286H904V526H1234L1240 541L1241 556L1240 586H704L689 571H664V541L646 511L634 500Q612 492 604 466Z"
        />
        <path d="M904 374Q912 376 919 381V526H904Z M1084 510H1099V526H1084Z" fill="#454545" />
        <path d="M1189 510H1204V541H1189Z" fill="#0d0d0d" />
        <Mosaic
          id="lower"
          rows={lowerRows}
          outline="M702 586H1240L1235 591Q1290 594 1312 600Q1340 606 1354 616V631H1372L1378 646V661H1441Q1462 668 1465 676H1478V691H1472L1471 721H1009V768Q985 760 979 747H949V676H918Q922 668 960 665L1015 659L978 648L905 632L870 630V623L841 610Q800 622 780 622Q750 620 727 604Z"
        />
      </svg>
      <svg viewBox="0 0 3 12" className="pointer-events-none absolute top-[786px] right-0 h-3 w-[3px]" aria-hidden="true">
        <path d="M3 1Q0 0 1 5L3 12z" fill="#f4511e" />
      </svg>
      <p className="absolute right-4 bottom-1.5 font-['Noto_Sans_CJK_SC',sans-serif] text-[17px] leading-6 text-[#888]">
        CSDN @吾尹先森
      </p>
    </>
  );
}

export default function App() {
  return (
    <div className="relative flex h-screen flex-col overflow-hidden bg-white pr-0.5 font-['Liberation_Sans',Arial,sans-serif] text-[#222]">
      <MenuBar />
      <div className="flex min-h-0 flex-1">
        <FlowNavigator />
        <main className="flex min-w-0 flex-1 flex-col">
          <h1 className="flex h-7 shrink-0 items-center bg-[#ccdcfb] pl-2.5 text-[12px] whitespace-pre">
            <strong>HARDWARE MANAGER</strong> - localhost/xilinx_tcf/Digilent/210251A08870
          </h1>
          <div className="mt-3 mb-[13px] ml-[11px] flex min-h-0 flex-1 gap-3.5">
            <div className="flex w-[462px] shrink-0 flex-col gap-3.5">
              <HardwarePanel />
              <PropertiesPanel />
            </div>
            <Dashboard />
          </div>
          <Console />
        </main>
      </div>
      <Annotations />
    </div>
  );
}
